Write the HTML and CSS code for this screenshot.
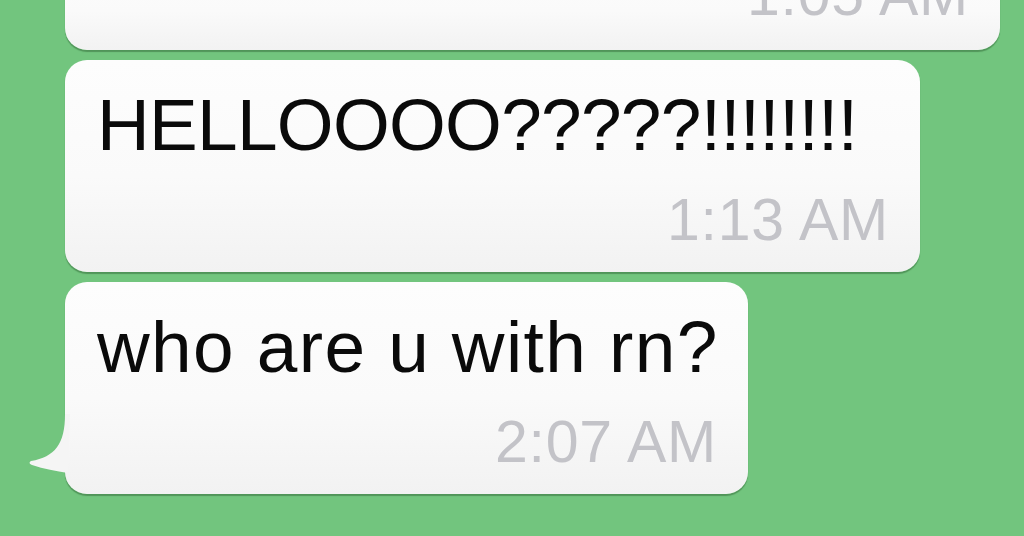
FILE: index.html
```html
<!DOCTYPE html>
<html lang="en">
<head>
<meta charset="UTF-8" />
<title>Chat</title>
<link rel="stylesheet" href="styles.css">
</head>
<body>

<!-- CHAT THREAD -->
<main class="thread">
  <div class="msg msg-first">
    <div class="msg-time">1:05 AM</div>
  </div>

  <div class="msg msg-wide">
    <div class="msg-text">HELLOOOO?????!!!!!!!!</div>
    <div class="msg-time">1:13 AM</div>
  </div>

  <div class="msg msg-last">
    <div class="msg-text">who are u with rn?</div>
    <div class="msg-time">2:07 AM</div>
    <svg class="tail" width="44" height="62" viewBox="0 0 44 62" aria-hidden="true">
      <path d="M37 0 C37 30 27 43 3 47 C1 48 1 50 4 51 C16 55 28 57 40 59 L42 0 Z" fill="#f5f5f5"/>
    </svg>
  </div>
</main>

</body>
</html>
```

FILE: styles.css
```css
* {
  box-sizing: border-box;
}
body {
  margin: 0;
  height: 536px;
  overflow: hidden;
  background: #72c57e;
  font-family: 'Liberation Sans', Arial, sans-serif;
}

.thread {
  display: flex;
  flex-direction: column;
  align-items: flex-start;
  gap: 10px;
  padding-left: 65px;
}

/* Bubbles */
.msg {
  position: relative;
  padding: 23px 31px 19px 32px;
  border-radius: 22px;
  background: linear-gradient(to bottom, #fdfdfd 0%, #fafafa 55%, #f2f2f2 100%);
  box-shadow: 0 2px 1px rgba(40, 90, 45, 0.45);
}
.msg-first {
  width: 935px;
  margin-top: -38px;
  padding-top: 0;
  padding-bottom: 22px;
}
.msg-wide {
  width: 855px;
}
.msg-wide .msg-text {
  letter-spacing: -0.7px;
}
.msg-last {
  width: 683px;
}
.msg-last .msg-text {
  letter-spacing: 1.4px;
}

.msg-text {
  font-size: 73px;
  line-height: 84px;
  color: #0a0a0a;
  white-space: nowrap;
}
.msg-time {
  margin-top: 20px;
  font-size: 59px;
  line-height: 66px;
  letter-spacing: 0.8px;
  color: #c3c3c8;
  text-align: right;
  white-space: nowrap;
}
.msg-first .msg-time {
  margin-top: 0;
}

/* Tail on last bubble */
.tail {
  position: absolute;
  left: -37px;
  bottom: 18px;
}
```
